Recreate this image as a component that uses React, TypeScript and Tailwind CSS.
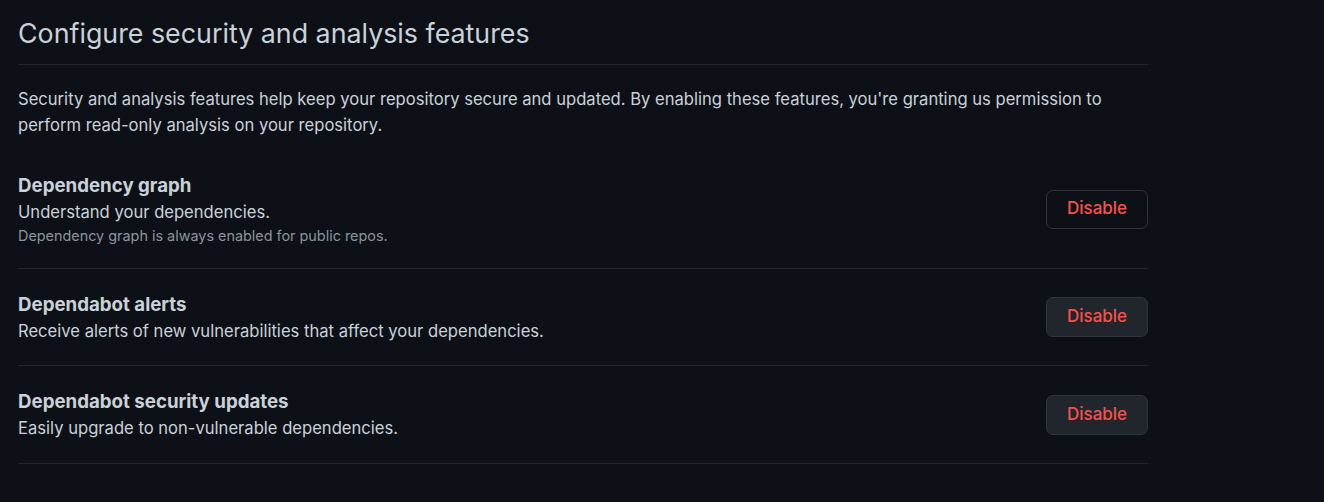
const features = [
  {
    title: "Dependency graph",
    description: "Understand your dependencies.",
    note: "Dependency graph is always enabled for public repos.",
    outlined: true,
  },
  {
    title: "Dependabot alerts",
    description: "Receive alerts of new vulnerabilities that affect your dependencies.",
  },
  {
    title: "Dependabot security updates",
    description: "Easily upgrade to non-vulnerable dependencies.",
  },
];

type Feature = (typeof features)[number] & { note?: string; outlined?: boolean };

const FeatureRow = ({ feature }: { feature: Feature }) => (
  <div className="flex flex-row items-center justify-between border-b border-[#21262d] pt-[22px] pb-[21.5px]">
    <div className="flex flex-col">
      <h3 className="text-[18.7px] leading-[27px] font-bold text-[#c9d1d9]">{feature.title}</h3>
      <p className="text-[16.6px] leading-[26px] text-[#c9d1d9]">{feature.description}</p>
      {feature.note && <p className="text-[14.4px] leading-[21px] text-[#8b949e]">{feature.note}</p>}
    </div>
    <button
      className={
        feature.outlined
          ? "h-[39px] w-[102px] rounded-[7px] border border-[#30363d] bg-transparent text-[17px] font-medium text-[#f85149]"
          : "h-[40px] w-[102px] rounded-[7px] border border-[#30363d] bg-[#21262d] text-[17px] font-medium text-[#f85149]"
      }
    >
      Disable
    </button>
  </div>
);

const App = () => {
  return (
    <div
      className="min-h-screen w-full bg-[#0d1117] pl-[18px] pt-[14px]"
      style={{ fontFamily: "Inter, 'Noto Sans', sans-serif" }}
    >
      <div className="w-[1130px]">
        <div className="border-b border-[#21262d] pb-[12px]">
          <h2 className="text-[26.8px] leading-[38px] font-normal text-[#c9d1d9]">
            Configure security and analysis features
          </h2>
        </div>
        <p className="mt-[21px] mb-[12px] text-[16.6px] leading-[26px] text-[#c9d1d9]">
          Security and analysis features help keep your repository secure and updated. By enabling these features,
          you're granting us permission to perform read-only analysis on your repository.
        </p>
        {features.map((f) => (
          <FeatureRow key={f.title} feature={f as Feature} />
        ))}
      </div>
    </div>
  );
};

export default App;
